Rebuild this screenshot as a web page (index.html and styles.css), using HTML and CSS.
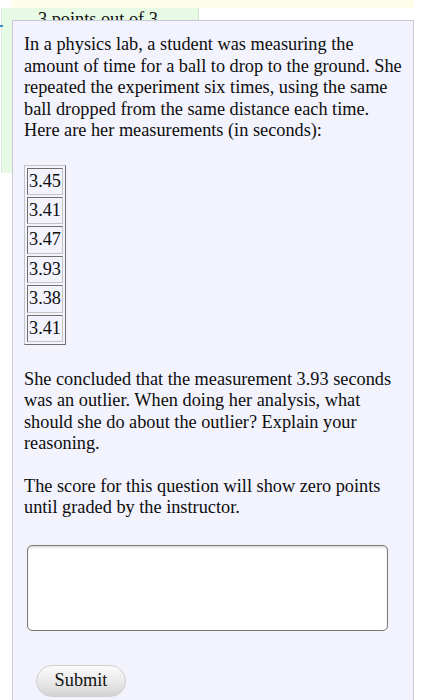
FILE: index.html
```html
<!DOCTYPE html>
<html>
<head>
<meta charset="utf-8">
<link rel="stylesheet" href="styles.css">
</head>
<body>
<div class="topbar"></div>
<div class="score-panel">
  <span class="tick"></span>
  <div class="score-text">3 points out of 3</div>
</div>
<div class="question">
  <p>In a physics lab, a student was measuring the amount of time for a ball to drop to the ground. She repeated the experiment six times, using the same ball dropped from the same distance each time. Here are her measurements (in seconds):</p>
  <table class="data">
    <tr><td>3.45</td></tr>
    <tr><td>3.41</td></tr>
    <tr><td>3.47</td></tr>
    <tr><td>3.93</td></tr>
    <tr><td>3.38</td></tr>
    <tr><td>3.41</td></tr>
  </table>
  <p>She concluded that the measurement 3.93 seconds was an outlier. When doing her analysis, what should she do about the outlier? Explain your reasoning.</p>
  <p>The score for this question will show zero points until graded by the instructor.</p>
  <textarea class="answer"></textarea>
  <div class="actions"><button class="submit">Submit</button></div>
</div>
</body>
</html>
```
FILE: styles.css
```css
html, body {
  margin: 0;
  padding: 0;
  background: #ffffff;
  font-family: "Liberation Serif", "Times New Roman", serif;
  font-size: 18.3px;
  line-height: 21.5px;
  color: #0d0d0d;
  overflow: hidden;
}
.topbar {
  margin-left: 12px;
  width: 402px;
  height: 8px;
  background: #fdfde9;
}
.score-panel {
  position: relative;
  width: 160px;
  height: 165px;
  padding-left: 36px;
  background: #e6fae4;
  border-left: 1px solid #d6e8dc;
  border-right: 1px solid #d3e3d3;
  margin-left: 1px;
}
.tick {
  position: absolute;
  left: -2px;
  top: 17px;
  width: 3px;
  height: 2px;
  background: #3b8bd0;
}
.score-text {
  padding-top: 1px;
}
.question {
  position: relative;
  margin: -153px 0 0 12px;
  width: 378px;
  min-height: 700px;
  padding: 13px 11px 0 11px;
  background: #f3f3fe;
  border: 1px solid #c8c8dc;
}
.question p {
  margin: 0 0 21px 0;
}
.data {
  margin: 23px 0 24px 0;
  border: 1px solid;
  border-color: #c4c4c4 #6e6e6e #6e6e6e #c4c4c4;
  border-spacing: 2px;
}
.data td {
  border: 1px solid;
  border-color: #6e6e6e #c4c4c4 #c4c4c4 #6e6e6e;
  padding: 2px 1px;
  line-height: 21.4px;
}
.answer {
  display: block;
  margin: 26px 0 0 3px;
  width: 361px;
  height: 86px;
  box-sizing: border-box;
  border: 1px solid #777;
  border-radius: 5px;
  background: #fff;
  box-shadow: inset 0 2px 2px rgba(0,0,0,0.12);
  resize: none;
}
.actions {
  margin-top: 34px;
  padding-left: 12px;
}
.submit {
  width: 90px;
  height: 32px;
  border: 1px solid #d0d0d0;
  border-radius: 16px;
  background: linear-gradient(#fbfbfb, #e6e6e6 60%, #d2d2d2);
  font-family: "Liberation Serif", "Times New Roman", serif;
  font-size: 18.3px;
  color: #111;
  padding: 0;
}
```
